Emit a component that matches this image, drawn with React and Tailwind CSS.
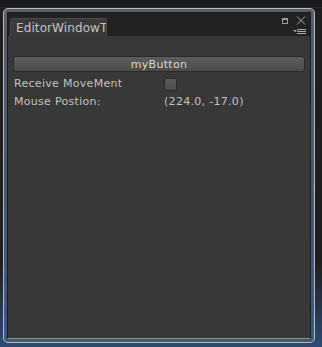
import React from 'react';

function TabBar() {
  return (
    <div className="h-[23px] flex items-end justify-between bg-[#222222] relative">
      <div className="ml-[2px] w-[97px] h-[18px] rounded-t-[3px] bg-[#3a3a3a] border-t border-x border-[#4a4a4a] overflow-hidden pl-[5px] flex items-center">
        <span className="whitespace-nowrap text-[12px] text-[#c2c2c2] tracking-[0.1px]">EditorWindowTest</span>
      </div>
      {/* window buttons */}
      <div className="absolute right-[4px] top-[3px] flex items-center gap-[8px]">
        <div className="w-[6px] h-[6px] border border-[#9a9a9a] border-t-2"></div>
        <svg width="10" height="9" viewBox="0 0 10 9">
          <path d="M1 0.5 L9 8.5 M9 0.5 L1 8.5" stroke="#a8a8a8" strokeWidth="1" />
        </svg>
      </div>
      <div className="absolute right-[3px] top-[16px]">
        <svg width="14" height="6" viewBox="0 0 14 6">
          <path d="M0 1 L4 1 L2 3 Z" fill="#b0b0b0" />
          <path d="M4 0.5 H13 M4 2.5 H13 M4 4.5 H13" stroke="#b0b0b0" strokeWidth="1" />
        </svg>
      </div>
    </div>
  );
}

export default function App() {
  return (
    <div className="w-[322px] h-[347px] bg-[#1f1f1f] flex flex-col overflow-hidden" style={{ fontFamily: '"DejaVu Sans", Verdana, sans-serif' }}>
      <div className="h-[8px] bg-[#1b1b1b] border-b border-[#262626]"></div>
      <div className="flex-1 flex bg-[linear-gradient(to_bottom,#1f1f1f_0%,#1f1f1f_75%,#2f4a72_100%)] pl-[3px] pr-[7px] pb-[4px]">
        <div className="flex-1 flex rounded-[5px] border border-[#b3bbc5] bg-gradient-to-b from-[#5a5f67] via-[#4c5a6e] to-[#3a5884] p-[3px]">
          <div className="flex-1 flex flex-col border-x border-t border-[#1c1c1c] border-b border-b-[#8a8a8a] bg-[#383838]">
            <TabBar />
            <div className="flex-1 flex flex-col px-[5px] pt-[20px] text-[11px] text-[#c0c0c0] tracking-[0.3px]">
              <button className="h-[16px] w-full rounded-[3px] border border-[#2a2a2a] bg-gradient-to-b from-[#5e5e5e] to-[#4a4a4a] text-[11px] text-[#d6d6d6] leading-none tracking-[0.3px]">
                myButton
              </button>
              <div className="h-[18px] mt-[3px] flex items-center pl-[1px]">
                <span className="w-[150px]">Receive MoveMent</span>
                <div className="w-[13px] h-[13px] rounded-[2px] border border-[#2b2b2b] bg-gradient-to-b from-[#5a5a5a] to-[#4c4c4c]"></div>
              </div>
              <div className="h-[18px] flex items-center pl-[1px]">
                <span className="w-[150px]">Mouse Postion:</span>
                <span>(224.0, -17.0)</span>
              </div>
            </div>
          </div>
        </div>
      </div>
    </div>
  );
}
